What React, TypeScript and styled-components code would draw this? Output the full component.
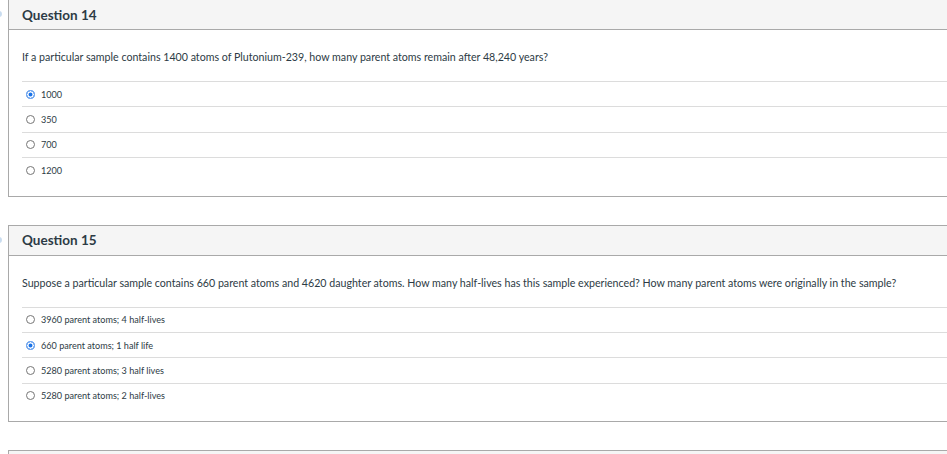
import React from 'react';
import styled, { createGlobalStyle } from 'styled-components';

const GlobalStyle = createGlobalStyle`
  html, body {
    margin: 0;
    padding: 0;
    background: #ffffff;
    overflow: hidden;
  }
  body {
    font-family: Lato, "Open Sans", "Liberation Sans", sans-serif;
    color: #2d3b45;
  }
`;

const Page = styled.div`
  display: flex;
  flex-direction: column;
  gap: 28px;
  width: 980px;
  margin-top: -1px;
  padding-left: 8px;
`;

const Card = styled.div`
  position: relative;
  border: 1px solid #a9a9a9;
  background: #ffffff;
`;

const Flag = styled.span`
  position: absolute;
  left: -13px;
  top: 11px;
  width: 6px;
  height: 6px;
  border-radius: 50%;
  background: #c9dcef;
`;

const Header = styled.div`
  display: flex;
  align-items: center;
  height: 29px;
  padding: 0 13px;
  background: #f5f5f5;
  border-bottom: 1px solid #a9a9a9;
  font-size: 13.5px;
  font-weight: 700;
  color: #2d3b45;
`;

const Body = styled.div`
  padding: 19px 0 13px 13px;
`;

const Prompt = styled.p`
  margin: 0 0 17px;
  font-size: 10.65px;
  line-height: 15px;
  color: #2d3b45;
`;

const Answers = styled.div`
  display: flex;
  flex-direction: column;
`;

const Answer = styled.label`
  display: flex;
  align-items: center;
  gap: 6px;
  height: 24.4px;
  padding-left: 4px;
  border-top: 1px solid #dcdcdc;
  font-size: 9.1px;
  color: #2d3b45;
`;

const Radio = styled.span<{ $checked?: boolean }>`
  box-sizing: border-box;
  width: 9px;
  height: 9px;
  border-radius: 50%;
  flex: none;
  border: 1px solid ${(p) => (p.$checked ? '#1a73e8' : '#767676')};
  background: ${(p) => (p.$checked ? '#1a73e8' : '#ffffff')};
  box-shadow: ${(p) => (p.$checked ? 'inset 0 0 0 1.5px #ffffff' : 'none')};
  ${(p) => (p.$checked ? 'outline: 1px solid #8fb8f0; outline-offset: -1px;' : '')}
`;

type Question = {
  title: string;
  prompt: string;
  answers: string[];
  selected: number;
};

const questions: Question[] = [
  {
    title: 'Question 14',
    prompt:
      'If a particular sample contains 1400 atoms of Plutonium-239, how many parent atoms remain after 48,240 years?',
    answers: ['1000', '350', '700', '1200'],
    selected: 0,
  },
  {
    title: 'Question 15',
    prompt:
      'Suppose a particular sample contains 660 parent atoms and 4620 daughter atoms. How many half-lives has this sample experienced? How many parent atoms were originally in the sample?',
    answers: [
      '3960 parent atoms; 4 half-lives',
      '660 parent atoms; 1 half life',
      '5280 parent atoms; 3 half lives',
      '5280 parent atoms; 2 half-lives',
    ],
    selected: 1,
  },
];

function App() {
  return (
    <>
      <GlobalStyle />
      <Page>
        {questions.map((q) => (
          <Card key={q.title}>
            <Flag />
            <Header>{q.title}</Header>
            <Body>
              <Prompt>{q.prompt}</Prompt>
              <Answers>
                {q.answers.map((a, i) => (
                  <Answer key={a}>
                    <Radio $checked={i === q.selected} />
                    {a}
                  </Answer>
                ))}
              </Answers>
            </Body>
          </Card>
        ))}
        <Card>
          <Header />
        </Card>
      </Page>
    </>
  );
}

export default App;
